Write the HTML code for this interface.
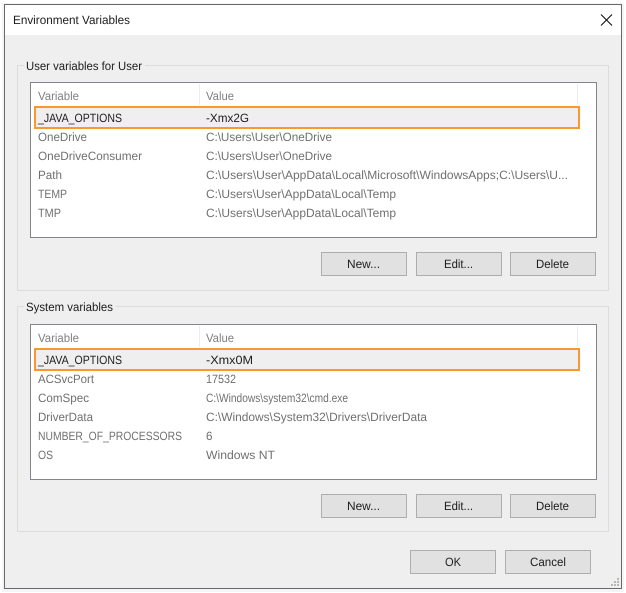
<!DOCTYPE html>
<html><head><meta charset="utf-8"><style>
html,body{margin:0;padding:0;background:#fff;width:626px;height:593px;overflow:hidden}
svg{display:block}
text{font-family:"Liberation Sans",sans-serif;font-size:12px;fill:#707070;text-rendering:geometricPrecision}
.d{fill:#1c1c1c}.h{fill:#808080}
</style></head><body>
<svg width="626" height="593" viewBox="0 0 626 593" xmlns="http://www.w3.org/2000/svg" shape-rendering="crispEdges">
<rect x="2" y="3" width="622" height="589" fill="#ececec" opacity=".5"/>
<rect x="4.5" y="4.5" width="617" height="584" fill="#efefef" stroke="#666a70"/>
<rect x="5" y="5" width="616" height="30" fill="#fff"/>
<text x="13" y="24" class="d" textLength="117" lengthAdjust="spacingAndGlyphs">Environment Variables</text>
<path d="M601 14.5L612 25.5M612 14.5L601 25.5" stroke="#111" stroke-width="1.1" fill="none" shape-rendering="auto"/>

<rect x="17.5" y="65.5" width="591" height="225" fill="none" stroke="#dcdcdc"/>
<rect x="24" y="60" width="121" height="12" fill="#efefef"/>
<text x="26" y="70" class="d" textLength="116" lengthAdjust="spacingAndGlyphs">User variables for User</text>
<rect x="30.5" y="82.5" width="566" height="155" fill="#fff" stroke="#82868c"/>
<path d="M199.5 84V105M577.5 84V105" stroke="#ececec"/>
<text x="38" y="100" class="h" textLength="41" lengthAdjust="spacingAndGlyphs">Variable</text>
<text x="206" y="100" class="h" textLength="28" lengthAdjust="spacingAndGlyphs">Value</text>
<rect x="35" y="107" width="544" height="21" fill="#efefef" stroke="#fb9731" stroke-width="2"/>
<text x="38" y="122" class="d" textLength="84" lengthAdjust="spacingAndGlyphs">_JAVA_OPTIONS</text>
<text x="206" y="122" class="d" textLength="43" lengthAdjust="spacingAndGlyphs">-Xmx2G</text>
<text x="38" y="141" textLength="49" lengthAdjust="spacingAndGlyphs">OneDrive</text>
<text x="206" y="141" textLength="126" lengthAdjust="spacingAndGlyphs">C:\Users\User\OneDrive</text>
<text x="38" y="160" textLength="104" lengthAdjust="spacingAndGlyphs">OneDriveConsumer</text>
<text x="206" y="160" textLength="126" lengthAdjust="spacingAndGlyphs">C:\Users\User\OneDrive</text>
<text x="38" y="179" textLength="24" lengthAdjust="spacingAndGlyphs">Path</text>
<text x="206" y="179" textLength="362" lengthAdjust="spacingAndGlyphs">C:\Users\User\AppData\Local\Microsoft\WindowsApps;C:\Users\U...</text>
<text x="38" y="198" textLength="29" lengthAdjust="spacingAndGlyphs">TEMP</text>
<text x="206" y="198" textLength="190" lengthAdjust="spacingAndGlyphs">C:\Users\User\AppData\Local\Temp</text>
<text x="38" y="217" textLength="23" lengthAdjust="spacingAndGlyphs">TMP</text>
<text x="206" y="217" textLength="190" lengthAdjust="spacingAndGlyphs">C:\Users\User\AppData\Local\Temp</text>

<g fill="#e1e1e1" stroke="#adadad">
<rect x="321.5" y="252.5" width="85" height="23"/><rect x="416.5" y="252.5" width="85" height="23"/><rect x="510.5" y="252.5" width="85" height="23"/>
<rect x="321.5" y="494.5" width="85" height="23"/><rect x="416.5" y="494.5" width="85" height="23"/><rect x="510.5" y="494.5" width="85" height="23"/>
<rect x="410.5" y="550.5" width="85" height="23"/><rect x="505.5" y="550.5" width="85" height="23"/>
</g>
<text x="347" y="268" class="d" textLength="33" lengthAdjust="spacingAndGlyphs">New...</text>
<text x="444" y="268" class="d" textLength="29" lengthAdjust="spacingAndGlyphs">Edit...</text>
<text x="536" y="268" class="d" textLength="33" lengthAdjust="spacingAndGlyphs">Delete</text>

<rect x="17.5" y="306.5" width="591" height="225" fill="none" stroke="#dcdcdc"/>
<rect x="24" y="301" width="92" height="12" fill="#efefef"/>
<text x="26" y="311" class="d" textLength="87" lengthAdjust="spacingAndGlyphs">System variables</text>
<rect x="30.5" y="324.5" width="566" height="155" fill="#fff" stroke="#82868c"/>
<path d="M199.5 326V347M577.5 326V347" stroke="#ececec"/>
<text x="38" y="342" class="h" textLength="41" lengthAdjust="spacingAndGlyphs">Variable</text>
<text x="206" y="342" class="h" textLength="28" lengthAdjust="spacingAndGlyphs">Value</text>
<rect x="35" y="349" width="544" height="21" fill="#efefef" stroke="#fb9731" stroke-width="2"/>
<text x="38" y="364" class="d" textLength="84" lengthAdjust="spacingAndGlyphs">_JAVA_OPTIONS</text>
<text x="206" y="364" class="d" textLength="47" lengthAdjust="spacingAndGlyphs">-Xmx0M</text>
<text x="38" y="383" textLength="56" lengthAdjust="spacingAndGlyphs">ACSvcPort</text>
<text x="206" y="383" textLength="30" lengthAdjust="spacingAndGlyphs">17532</text>
<text x="38" y="402" textLength="51" lengthAdjust="spacingAndGlyphs">ComSpec</text>
<text x="206" y="402" textLength="142" lengthAdjust="spacingAndGlyphs">C:\Windows\system32\cmd.exe</text>
<text x="38" y="421" textLength="55" lengthAdjust="spacingAndGlyphs">DriverData</text>
<text x="206" y="421" textLength="221" lengthAdjust="spacingAndGlyphs">C:\Windows\System32\Drivers\DriverData</text>
<text x="38" y="440" textLength="144" lengthAdjust="spacingAndGlyphs">NUMBER_OF_PROCESSORS</text>
<text x="206" y="440" textLength="6.5" lengthAdjust="spacingAndGlyphs">6</text>
<text x="38" y="459" textLength="15" lengthAdjust="spacingAndGlyphs">OS</text>
<text x="206" y="459" textLength="69" lengthAdjust="spacingAndGlyphs">Windows NT</text>

<text x="347" y="510" class="d" textLength="33" lengthAdjust="spacingAndGlyphs">New...</text>
<text x="444" y="510" class="d" textLength="29" lengthAdjust="spacingAndGlyphs">Edit...</text>
<text x="536" y="510" class="d" textLength="33" lengthAdjust="spacingAndGlyphs">Delete</text>
<text x="445" y="566" class="d" textLength="16" lengthAdjust="spacingAndGlyphs">OK</text>
<text x="530" y="566" class="d" textLength="36" lengthAdjust="spacingAndGlyphs">Cancel</text>

<g fill="#b8b8b8">
<rect x="617" y="578" width="2" height="2"/>
<rect x="614" y="581" width="2" height="2"/><rect x="617" y="581" width="2" height="2"/>
<rect x="611" y="584" width="2" height="2"/><rect x="614" y="584" width="2" height="2"/><rect x="617" y="584" width="2" height="2"/>
</g>
</svg>
</body></html>
